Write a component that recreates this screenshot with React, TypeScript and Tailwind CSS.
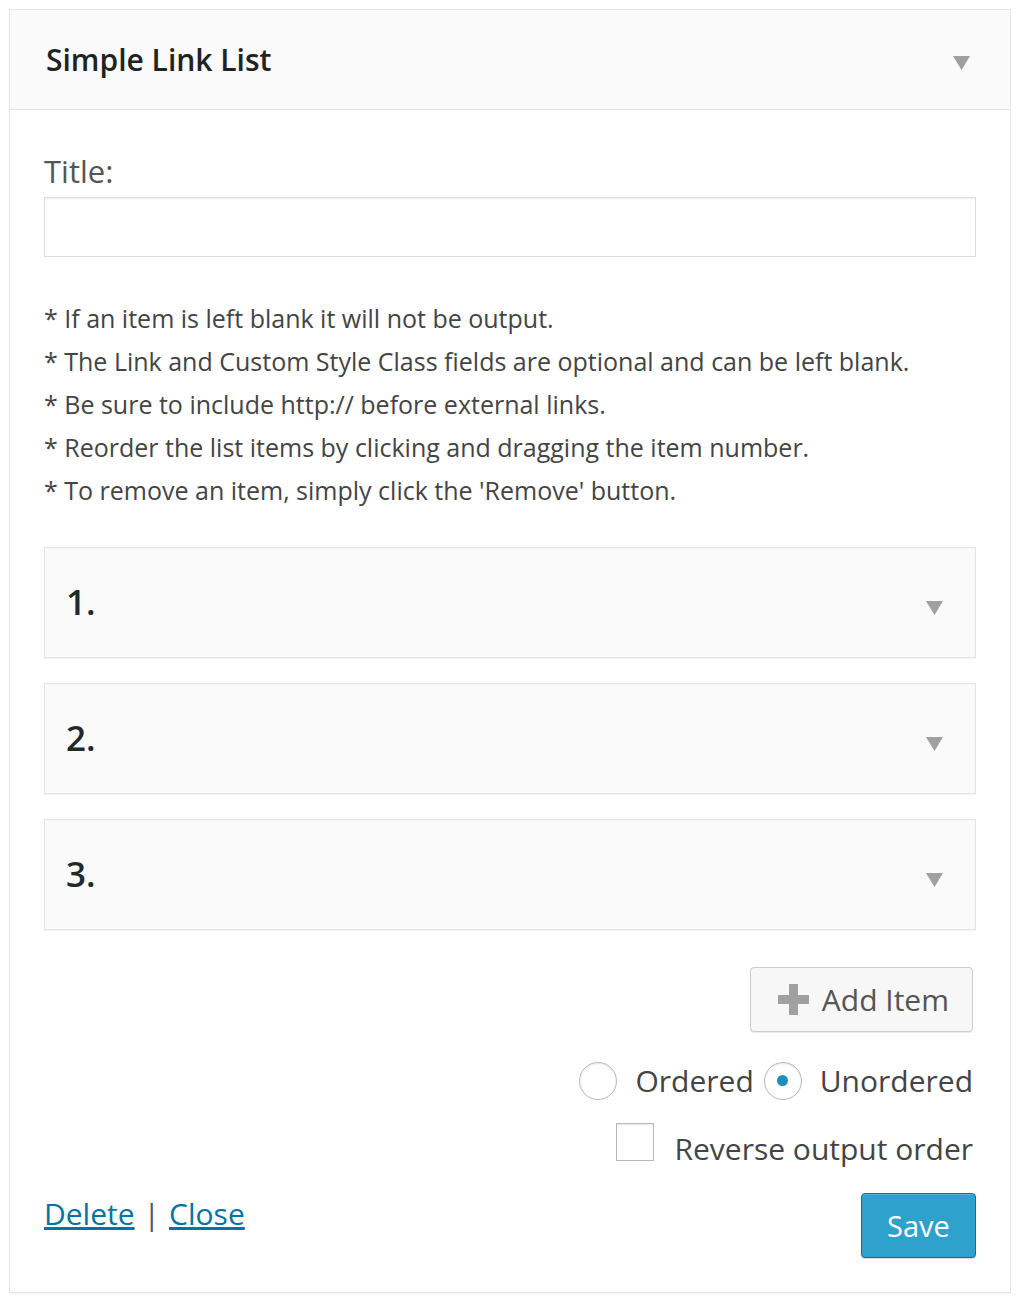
import { useState } from 'react';

const notes = [
  '* If an item is left blank it will not be output.',
  '* The Link and Custom Style Class fields are optional and can be left blank.',
  '* Be sure to include http:// before external links.',
  '* Reorder the list items by clicking and dragging the item number.',
  "* To remove an item, simply click the 'Remove' button.",
];

function Caret({ className = '' }: { className?: string }) {
  return (
    <svg width="17" height="14" viewBox="0 0 17 14" className={`shrink-0 ${className}`}>
      <path d="M0 0h17L8.5 14z" fill="#a0a0a0" />
    </svg>
  );
}

export default function App() {
  const [order, setOrder] = useState<'ordered' | 'unordered'>('unordered');
  const [reverse, setReverse] = useState(false);

  return (
    <div className="min-h-screen bg-white pt-[9px] pl-[9px] font-['Open_Sans',sans-serif] text-[#444]">
      <div className="w-[1002px] border border-[#e5e5e5] bg-white shadow-[0_1px_1px_rgba(0,0,0,0.04)]">
        <div className="flex h-[100px] items-center justify-between border-b border-[#e5e5e5] bg-[#fafafa] pl-[36px] pr-[40px]">
          <h3 className="text-[30px] font-semibold text-[#222]">Simple Link List</h3>
          <Caret className="mt-[6px]" />
        </div>

        <div className="px-[34px] pt-[44px] pb-[34px]">
          <label className="block text-[31px] leading-[34px] text-[#555]">Title:</label>
          <input
            type="text"
            className="mt-[9px] block h-[60px] w-full border border-[#ddd] bg-white px-3 text-[28px] shadow-[inset_0_1px_2px_rgba(0,0,0,0.07)] outline-none"
          />

          <div className="mt-[40px] text-[25px] leading-[43px] text-[#444]">
            {notes.map((n) => (
              <p key={n}>{n}</p>
            ))}
          </div>

          <div className="mt-[35px] flex flex-col gap-[25px]">
            {['1.', '2.', '3.'].map((n) => (
              <div
                key={n}
                className="flex h-[111px] items-center justify-between border border-[#e5e5e5] bg-[#fafafa] pl-[21px] pr-[32px] shadow-[0_1px_1px_rgba(0,0,0,0.04)]"
              >
                <span className="text-[35px] font-semibold text-[#23282d]">{n}</span>
                <Caret className="mt-[10px]" />
              </div>
            ))}
          </div>

          <div className="mt-[37px] flex flex-col items-end">
            <button
              type="button"
              className="mr-[3px] flex h-[65px] items-center gap-[13px] rounded-[4px] border border-[#ccc] bg-[#f7f7f7] pl-[27px] pr-[23px] text-[30px] text-[#555] shadow-[0_1px_0_rgba(0,0,0,0.08)]"
            >
              <svg width="31" height="31" viewBox="0 0 31 31">
                <path d="M11 0h9v11h11v9H20v11h-9V20H0v-9h11z" fill="#a0a0a0" />
              </svg>
              Add Item
            </button>

            <div className="mt-[28px] mr-[3px] flex items-center text-[30px] leading-[41px] text-[#444]">
              <label className="flex items-center">
                <span
                  onClick={() => setOrder('ordered')}
                  className="flex h-[38px] w-[38px] items-center justify-center rounded-full border border-[#b4b9be] bg-white shadow-[inset_0_1px_2px_rgba(0,0,0,0.1)]"
                >
                  {order === 'ordered' && <span className="h-[11px] w-[11px] rounded-full bg-[#1e8cbe]" />}
                </span>
                <span className="ml-[18px] mr-[10px]">Ordered</span>
              </label>
              <label className="flex items-center">
                <span
                  onClick={() => setOrder('unordered')}
                  className="flex h-[38px] w-[38px] items-center justify-center rounded-full border border-[#b4b9be] bg-white shadow-[inset_0_1px_2px_rgba(0,0,0,0.1)]"
                >
                  {order === 'unordered' && <span className="h-[11px] w-[11px] rounded-full bg-[#1e8cbe]" />}
                </span>
                <span className="ml-[18px]">Unordered</span>
              </label>
            </div>

            <label className="mt-[22px] mr-[3px] flex items-start text-[30px] leading-[41px] text-[#444]">
              <span
                onClick={() => setReverse(!reverse)}
                className="flex h-[38px] w-[38px] items-center justify-center border border-[#b4b9be] bg-white shadow-[inset_0_1px_2px_rgba(0,0,0,0.1)]"
              >
                {reverse && <span className="text-[#1e8cbe]">✓</span>}
              </span>
              <span className="mt-[5px] ml-[20px]">Reverse output order</span>
            </label>
          </div>

          <div className="mt-[24px] flex items-start justify-between">
            <div className="text-[30px] leading-[41px] text-[#555]">
              <a href="#" className="text-[#0074a2] underline">Delete</a>
              <span className="mx-[9px]">|</span>
              <a href="#" className="text-[#0074a2] underline">Close</a>
            </div>
            <button
              type="button"
              className="h-[65px] w-[115px] rounded-[4px] border border-[#0074a2] bg-[#2ea2cc] text-[29px] text-white shadow-[inset_0_1px_0_rgba(120,200,230,0.5),0_1px_0_rgba(0,0,0,0.15)]"
            >
              Save
            </button>
          </div>
        </div>
      </div>
    </div>
  );
}
